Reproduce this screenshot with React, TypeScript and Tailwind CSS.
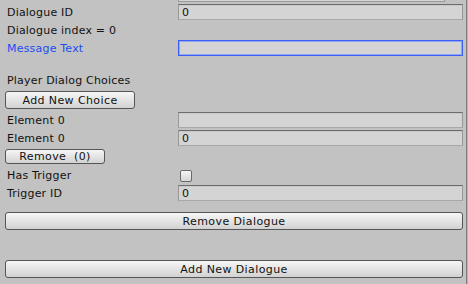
import React from "react";

const font = { fontFamily: '"DejaVu Sans", Verdana, sans-serif' };

function Field({ value, focused }: { value?: string; focused?: boolean }) {
  return (
    <div
      className={
        focused
          ? "ml-[178px] w-[285px] h-[16px] bg-[#d4d4d4] border border-[#3d5ff2] shadow-[inset_0_0_0_1px_#8ea4f4]"
          : "ml-[178px] w-[285px] h-[16px] bg-[#d4d4d4] border border-[#979797] border-t-[#6c6c6c] border-b-[#a8a8a8] shadow-[inset_0_1px_0_#c9c9c9] flex items-center pl-[3px] text-[11px] leading-none text-[#111]"
      }
    >
      {value}
    </div>
  );
}

function Row({ label, children, blue }: { label: string; children?: React.ReactNode; blue?: boolean }) {
  return (
    <div className="relative h-[16px] flex items-center">
      <span
        className={
          blue
            ? "absolute left-[7px] text-[11px] leading-none tracking-[0.2px] text-[#1c4cf2]"
            : "absolute left-[7px] text-[11px] leading-none tracking-[0.2px] text-[#111]"
        }
      >
        {label}
      </span>
      {children}
    </div>
  );
}

function Btn({ label, w, h }: { label: string; w: string; h: string }) {
  return (
    <button
      className={`ml-[5px] ${w} ${h} rounded-[3px] border border-[#565656] bg-gradient-to-b from-[#f6f6f6] to-[#d2d2d2] text-[11px] leading-none text-[#111] flex items-center justify-center tracking-[0.4px] whitespace-pre`}
    >
      {label}
    </button>
  );
}

export default function App() {
  return (
    <div className="w-[468px] h-[284px] bg-[#c2c2c2] overflow-hidden flex" style={font}>
      <div className="w-[466px] flex flex-col">
        <div className="ml-[178px] w-[267px] h-[2px] bg-[#d4d4d4] border-b border-[#9a9a9a] border-x border-x-[#9a9a9a]" />
        <div className="mt-[2px]">
          <Row label="Dialogue ID">
            <Field value="0" />
          </Row>
        </div>
        <div className="mt-[2px]">
          <Row label="Dialogue index = 0" />
        </div>
        <div className="mt-[2px]">
          <Row label="Message Text" blue>
            <Field focused />
          </Row>
        </div>
        <div className="mt-[16px]">
          <Row label="Player Dialog Choices" />
        </div>
        <div className="mt-[3px]">
          <Btn label="Add New Choice" w="w-[130px]" h="h-[18px]" />
        </div>
        <div className="mt-[3px]">
          <Row label="Element 0">
            <Field />
          </Row>
        </div>
        <div className="mt-[2px]">
          <Row label="Element 0">
            <Field value="0" />
          </Row>
        </div>
        <div className="mt-[3px]">
          <Btn label="Remove  (0)" w="w-[100px]" h="h-[15px]" />
        </div>
        <div className="mt-[3px] relative h-[17px] flex items-center">
          <span className="absolute left-[7px] text-[11px] leading-none tracking-[0.2px] text-[#111]">Has Trigger</span>
          <div className="ml-[180px] w-[12px] h-[12px] rounded-[2px] border border-[#6a6a6a] bg-gradient-to-b from-[#f4f4f4] to-[#d6d6d6]" />
        </div>
        <div className="mt-[1px]">
          <Row label="Trigger ID">
            <Field value="0" />
          </Row>
        </div>
        <div className="mt-[11px]">
          <Btn label="Remove Dialogue" w="w-[458px]" h="h-[18px]" />
        </div>
        <div className="mt-[30px]">
          <Btn label="Add New Dialogue" w="w-[458px]" h="h-[18px]" />
        </div>
      </div>
      <div className="w-[1px] h-full bg-[#7e7e7e]" />
      <div className="w-[1px] h-full bg-[#b4b4b4]" />
    </div>
  );
}
